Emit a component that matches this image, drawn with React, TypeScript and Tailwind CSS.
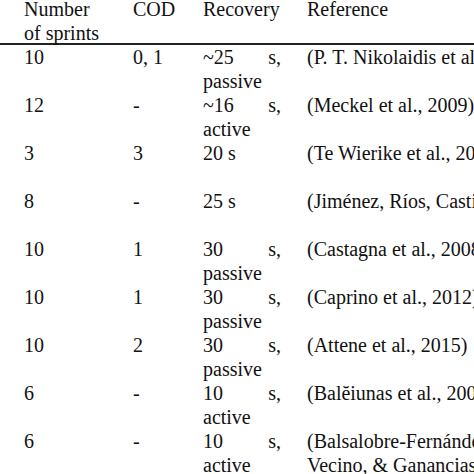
const rows = [
  { n: "10", cod: "0, 1", rec: "~25 s, passive", ref: ["(P. T. Nikolaidis et al., 2016)"] },
  { n: "12", cod: "-", rec: "~16 s, active", ref: ["(Meckel et al., 2009)"] },
  { n: "3", cod: "3", rec: "20 s", ref: ["(Te Wierike et al., 2014)"] },
  { n: "8", cod: "-", rec: "25 s", ref: ["(Jiménez, Ríos, Castillo, & Ruiz, 2015)"] },
  { n: "10", cod: "1", rec: "30 s, passive", ref: ["(Castagna et al., 2008)"] },
  { n: "10", cod: "1", rec: "30 s, passive", ref: ["(Caprino et al., 2012)"] },
  { n: "10", cod: "2", rec: "30 s, passive", ref: ["(Attene et al., 2015)"] },
  { n: "6", cod: "-", rec: "10 s, active", ref: ["(Balĕiunas et al., 2006)"] },
  {
    n: "6",
    cod: "-",
    rec: "10 s, active",
    ref: ["(Balsalobre-Fernández, Tejero-González, del Campo-", "Vecino, & Ganancias, 2014)"],
  },
]

function Row({ n, cod, rec, refLines }: { n: string; cod: string; rec: string; refLines: string[] }) {
  return (
    <div className="grid grid-cols-[109px_70px_104px_320px] pl-[24px] h-[48px]">
      <div>{n}</div>
      <div>{cod}</div>
      <div className="pr-[26px]">
        <p className="text-justify">{rec}</p>
      </div>
      <div>
        {refLines.map((l) => (
          <div key={l} className="whitespace-nowrap">
            {l}
          </div>
        ))}
      </div>
    </div>
  )
}

export default function App() {
  return (
    <div className="w-[474px] h-[474px] overflow-hidden bg-white text-[#111] text-[20px] leading-[24px] font-['Liberation_Serif','Times_New_Roman',serif]">
      <div className="mt-[-3px] w-[640px]">
        {/* Header */}
        <div className="border-b-[2px] border-[#222]">
          <div className="grid grid-cols-[109px_70px_104px_320px] pl-[24px] h-[46px]">
            <div>
              Number
              <br />
              of sprints
            </div>
            <div>COD</div>
            <div>Recovery</div>
            <div>Reference</div>
          </div>
        </div>

        {/* Body */}
        {rows.map((r, i) => (
          <Row key={i} n={r.n} cod={r.cod} rec={r.rec} refLines={r.ref} />
        ))}
      </div>
    </div>
  )
}
